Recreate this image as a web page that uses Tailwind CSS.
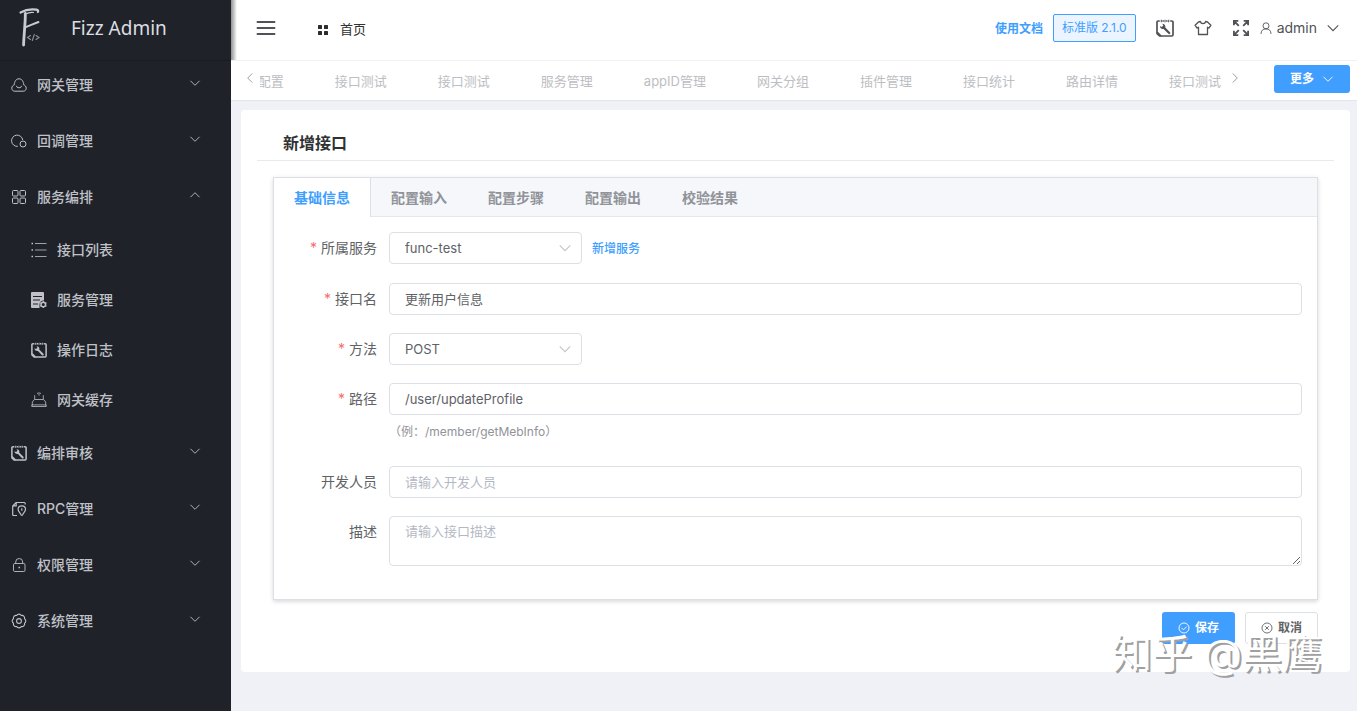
<!DOCTYPE html>
<html lang="zh-CN">
<head>
<meta charset="utf-8">
<meta name="viewport" content="width=device-width, initial-scale=1">
<title>Fizz Admin</title>
<script src="https://cdn.jsdelivr.net/npm/@tailwindcss/browser@4"></script>
</head>
<body class="flex min-h-screen bg-[#eff1f6] font-['Inter','Noto_Sans_CJK_SC',sans-serif] text-[13px] text-[#606266]">

<svg class="hidden" aria-hidden="true">
  <symbol id="down" viewBox="0 0 12 12"><path d="M1.500 3.800 6 8.300l4.500-4.500" fill="none" stroke="currentColor" stroke-width=".9"/></symbol>
  <symbol id="wrench" viewBox="0 0 18 18">
    <path d="M3.800 2H2.200Q1 2 1 3.200v9.800L5 17h10.800q1.200 0 1.200-1.200V3.200Q17 2 15.800 2h-1.600" fill="none" stroke="currentColor" stroke-width="1.700"/>
    <path d="M5.300.8v2.400M9 .8v2.400M12.700.8v2.400" fill="none" stroke="currentColor" stroke-width="1.100"/>
    <path d="M6.400 2h1.500M10.100 2h1.500" fill="none" stroke="currentColor" stroke-width="1.500"/>
    <path d="M.2 12.500 5.500 17.800H3.200L.2 15Z" fill="currentColor"/>
    <path d="M7.800 8.600 13.200 14" fill="none" stroke="currentColor" stroke-width="2.200" stroke-linecap="round"/>
    <path d="M6.200 4.700A3 3 0 0 1 9.400 8.200L8 9.800A3 3 0 0 1 3.900 7L5.700 8 7.300 6.500Z" fill="currentColor"/>
  </symbol>
</svg>

<aside class="w-[231px] shrink-0 bg-[#20222a] text-sm font-medium text-[#bfc1c6]">
  <div class="flex h-[61px] items-center border-b border-[#1a1b22] pb-1 pl-4">
    <svg class="h-11 w-7 shrink-0" viewBox="0 0 28 44" fill="none" stroke="#c9cacf" stroke-linecap="round" aria-hidden="true">
      <path d="M4.500 6.500C9 4 15 2.800 20.500 3.700c1.500.3 2.200 1.200 1.300 2.300" stroke-width="2.200"/>
      <path d="M9.300 7.500c.3 8-1.500 22-1.700 31.500" stroke-width="2.800"/>
      <path d="M9.500 8c3-1.500 5.500-1.800 8-1.500" stroke-width="1.200"/>
      <path d="M9 21.500c4-1.700 8-3.200 13.500-5.500" stroke-width="1.900"/>
      <path d="m14.500 29.500-3 2 3 2M20 29.500l3 2-3 2M18.300 28.500l-2 6" stroke-width="1.100" stroke="#8f9198"/>
    </svg>
    <h1 class="ml-[27px] font-['Noto_Sans',sans-serif] text-[19px] leading-7 font-normal text-[#dcdde0]">Fizz Admin</h1>
  </div>
  <nav class="-mt-1" aria-label="主菜单">
    <button type="button" class="flex h-14 w-full items-center pl-[11px] pr-[30px] text-left">
      <svg class="size-4" viewBox="0 0 16 16" fill="none" stroke="currentColor" aria-hidden="true"><path d="M3.800 14.200C1.800 14.200.8 12.800.8 11.200c0-1.700 1-2.800 2.500-3.400C3.500 4.200 5.200 1.800 8 1.800s4.500 2.400 4.700 6c1.500.6 2.500 1.700 2.500 3.400 0 1.600-1 3-3 3Z"/><path d="M5.300 8.800a2.800 2.800 0 0 0 5.400 0"/></svg>
      <span class="ml-[10px] flex-1">网关管理</span>
      <svg class="mb-1 size-3" aria-hidden="true"><use href="#down"/></svg>
    </button>
    <button type="button" class="flex h-14 w-full items-center pl-[11px] pr-[30px] text-left">
      <svg class="size-4" viewBox="0 0 16 16" fill="none" stroke="currentColor" aria-hidden="true"><path d="M6.800 13.300A5.600 5.600 0 1 1 11.700 7"/><circle cx="12" cy="11" r="3"/></svg>
      <span class="ml-[10px] flex-1">回调管理</span>
      <svg class="mb-1 size-3" aria-hidden="true"><use href="#down"/></svg>
    </button>
    <button type="button" aria-expanded="true" class="flex h-14 w-full items-center pl-[11px] pr-[30px] text-left">
      <svg class="size-4" viewBox="0 0 16 16" fill="none" stroke="currentColor" aria-hidden="true"><rect x="1.500" y="1.500" width="5.500" height="5.500" rx="1"/><rect x="9" y="1.500" width="5.500" height="5.500" rx="1"/><rect x="1.500" y="9" width="5.500" height="5.500" rx="1"/><rect x="9" y="9" width="5.500" height="5.500" rx="1"/></svg>
      <span class="ml-[10px] flex-1">服务编排</span>
      <svg class="mb-1 size-3 rotate-180" aria-hidden="true"><use href="#down"/></svg>
    </button>
    <a href="#" class="flex h-[50px] items-center pl-[31px]">
      <svg class="size-4" viewBox="0 0 16 16" fill="none" stroke="currentColor" aria-hidden="true"><path d="M4 1.500h11.500M4 8h11.500M4 14.500h11.500" stroke-width=".8"/><path d="M.5 1.500H2M.5 8H2M.5 14.500H2" stroke-width="1.400"/></svg>
      <span class="ml-[10px]">接口列表</span>
    </a>
    <a href="#" class="flex h-[50px] items-center pl-[31px]">
      <svg class="size-4" viewBox="0 0 16 16" aria-hidden="true"><path d="M1 0h11q1 0 1 1v7.500a4 4 0 0 0-4.500 4V16H1q-1 0-1-1V1q0-1 1-1Z" fill="currentColor"/><path d="M2 4.500h9M2 8h7M2 12h5" stroke="#20222a" stroke-width="1"/><circle cx="12.300" cy="12.500" r="2.300" fill="none" stroke="currentColor" stroke-width="1.500"/><path d="M12.300 8.900v1.300M12.300 14.800v1.300M9.200 10.700l1 .6M14.400 13.700l1.100.6M9.200 14.300l1-.6M14.400 11.300l1.100-.6" stroke="currentColor" stroke-width="1.200"/></svg>
      <span class="ml-[10px]">服务管理</span>
    </a>
    <a href="#" class="flex h-[50px] items-center pl-[31px]">
      <svg class="size-4" aria-hidden="true"><use href="#wrench"/></svg>
      <span class="ml-[10px]">操作日志</span>
    </a>
    <a href="#" class="flex h-[50px] items-center pl-[31px]">
      <svg class="size-4" viewBox="0 0 16 16" fill="none" stroke="currentColor" stroke-width=".8" aria-hidden="true"><path d="M3.700 3.200v4L1.300 10v3.500M12.300 3.200v4l2.400 2.800v3.500M3.700 7.500h8.600M.8 14.500h14.400v-1.600H.8ZM6 1.500q2-1.300 4 0M7.200 3q.8-.6 1.600 0" /></svg>
      <span class="ml-[10px]">网关缓存</span>
    </a>
    <button type="button" class="flex h-14 w-full items-center pl-[11px] pr-[30px] text-left">
      <svg class="size-4" aria-hidden="true"><use href="#wrench"/></svg>
      <span class="ml-[10px] flex-1">编排审核</span>
      <svg class="mb-1 size-3" aria-hidden="true"><use href="#down"/></svg>
    </button>
    <button type="button" class="flex h-14 w-full items-center pl-[11px] pr-[30px] text-left">
      <svg class="size-4" viewBox="0 0 16 16" fill="none" stroke="currentColor" stroke-width="1.200" aria-hidden="true"><path d="M6 14.500H2.700q-1 0-1-1V5L5 1.500h8.200q1 0 1 1V3.500M5.200 1.500v3.300H1.700"/><path d="M10.800 4.800c2.200 0 3.700 1.300 3.700 3.400 0 2-1.500 3-2.200 4.300-.4.900-.8 2-1.500 2s-1.100-1.100-1.500-2c-.7-1.300-2.200-2.300-2.200-4.300 0-2.100 1.500-3.400 3.700-3.400Z"/><path d="M10.800 7.200v2.600"/></svg>
      <span class="ml-[10px] flex-1">RPC管理</span>
      <svg class="mb-1 size-3" aria-hidden="true"><use href="#down"/></svg>
    </button>
    <button type="button" class="flex h-14 w-full items-center pl-[11px] pr-[30px] text-left">
      <svg class="size-4" viewBox="0 0 16 16" fill="none" stroke="currentColor" stroke-width=".9" aria-hidden="true"><rect x="2.500" y="6.500" width="11.500" height="8" rx="1.200"/><path d="M4.700 6.500V5a3.500 3.500 0 0 1 7 0v1.500"/><path d="M7.500 10.500h1.500" stroke-width="1.300"/></svg>
      <span class="ml-[10px] flex-1">权限管理</span>
      <svg class="mb-1 size-3" aria-hidden="true"><use href="#down"/></svg>
    </button>
    <button type="button" class="flex h-14 w-full items-center pl-[11px] pr-[30px] text-left">
      <svg class="size-4" viewBox="0 0 16 16" fill="none" stroke="currentColor" stroke-width="1.100" stroke-linejoin="round" aria-hidden="true"><path d="M5.700 2.460a2.700 2.700 0 0 1 4.600 0a2.700 2.700 0 0 1 3.240 3.240a2.700 2.700 0 0 1 0 4.600a2.700 2.700 0 0 1-3.240 3.240a2.700 2.700 0 0 1-4.600 0a2.700 2.700 0 0 1-3.240-3.240a2.700 2.700 0 0 1 0-4.600a2.700 2.700 0 0 1 3.240-3.240Z"/><circle cx="8" cy="8" r="2.400"/></svg>
      <span class="ml-[10px] flex-1">系统管理</span>
      <svg class="mb-1 size-3" aria-hidden="true"><use href="#down"/></svg>
    </button>
  </nav>
</aside>

<div class="flex min-w-0 flex-1 flex-col">
  <header class="relative flex h-[61px] shrink-0 items-center border-b border-[#f2f2f4] bg-white pb-1 pl-[25px] pr-[17px]">
    <div class="absolute inset-y-0 left-0 w-[6px] bg-linear-to-r from-[#20222a]/50 to-transparent"></div>
    <button type="button" aria-label="折叠菜单"><svg class="h-[14px] w-5" viewBox="0 0 20 14" stroke="#505256" stroke-width="1.900" stroke-linecap="round"><path d="M1.500 1h17M1.500 7h17M1.500 13h17"/></svg></button>
    <nav class="ml-[42px] flex items-center pt-[3px]" aria-label="位置">
      <a href="#" class="flex items-center gap-3 text-[#303133]"><svg class="size-[10px]" viewBox="0 0 10 10" fill="#2c2d31" aria-hidden="true"><rect width="4" height="4" rx=".6"/><rect x="6" width="4" height="4" rx=".6"/><rect y="6" width="4" height="4" rx=".6"/><rect x="6" y="6" width="4" height="4" rx=".6"/></svg>首页</a>
    </nav>
    <div class="ml-auto flex items-center text-[#505256]">
      <a href="#" class="pt-px text-xs font-bold text-[#409eff]">使用文档</a>
      <span class="ml-[10px] flex h-7 items-center rounded-[2px] border border-[#409eff] bg-[#ecf5ff] px-2 text-xs text-[#409eff]">标准版 2.1.0</span>
      <button type="button" class="ml-5" aria-label="日志"><svg class="size-[18px]"><use href="#wrench"/></svg></button>
      <button type="button" class="ml-5" aria-label="主题"><svg class="size-[18px]" viewBox="0 0 18 18" fill="none" stroke="currentColor" stroke-width="1.300" stroke-linejoin="round"><path d="M6.300 2.500a2.800 2.800 0 0 0 5.400 0L13.500 3l3.400 3.300-2 2.700-1.400-.8v7.300h-9V8.200l-1.400.8-2-2.700L4.500 3Z"/></svg></button>
      <button type="button" class="ml-5" aria-label="全屏"><svg class="size-[18px]" viewBox="0 0 18 18" fill="none" stroke="currentColor" stroke-width="1.800"><path d="M1.900 6.300V1.900h4.400M2 2l4.800 4.800M11.700 1.900h4.400v4.400M16 2l-4.800 4.800M1.900 11.700v4.400h4.400M2 16l4.800-4.800M11.700 16.100h4.400v-4.400M16 16l-4.800-4.800"/></svg></button>
      <button type="button" class="ml-[10px] flex items-center text-sm">
        <svg class="h-[14px] w-3" viewBox="0 0 12 14" fill="none" stroke="currentColor" stroke-width=".9" aria-hidden="true"><circle cx="6" cy="4.800" r="3"/><path d="M1 12.900c0-3.200 1.900-5 5-5s5 1.800 5 5"/></svg>
        <span class="ml-[5px]">admin</span>
        <svg class="ml-[9px] size-[14px]" aria-hidden="true"><use href="#down"/></svg>
      </button>
    </div>
  </header>

  <div class="flex h-10 shrink-0 items-center border-b border-[#e4e5ea] bg-white pl-[13px] pr-[7px]">
    <button type="button" class="mb-[6px]" aria-label="向左"><svg class="size-3 rotate-90 text-[#909399]"><use href="#down"/></svg></button>
    <nav class="ml-1 flex min-w-0 flex-1 justify-end gap-[51px] overflow-hidden pt-[2px] pr-1 whitespace-nowrap text-[#bcbec2]" aria-label="标签页">
      <a href="#">配置</a><a href="#">接口测试</a><a href="#">接口测试</a><a href="#">服务管理</a><a href="#">appID管理</a><a href="#">网关分组</a><a href="#">插件管理</a><a href="#">接口统计</a><a href="#">路由详情</a><a href="#">接口测试</a>
    </nav>
    <button type="button" class="mb-[6px] ml-1" aria-label="向右"><svg class="size-3 -rotate-90 text-[#909399]"><use href="#down"/></svg></button>
    <button type="button" class="ml-[33px] mb-1 flex h-7 w-[76px] items-center justify-center gap-2 rounded-[3px] bg-[#409eff] text-xs font-bold text-white">更多<svg class="size-3" aria-hidden="true"><use href="#down"/></svg></button>
  </div>

  <main class="relative mt-[9px] mr-[7px] mb-[39px] ml-[10px] rounded-[4px] bg-white px-4 pt-[19px] pb-7">
    <h2 class="border-b border-[#e8eaee] pb-[3px] pl-[26px] text-base leading-7 font-bold text-[#303133]">新增接口</h2>
    <div class="mx-4 mt-4 border border-[#dcdfe6] bg-white shadow-[0_2px_4px_rgba(0,0,0,0.12),0_0_6px_rgba(0,0,0,0.04)]">
      <div role="tablist" class="flex h-[39px] border-b border-[#e4e7ed] bg-[#f5f7fa] text-sm font-bold text-[#909399]">
        <button type="button" role="tab" aria-selected="true" class="-mb-px border-r border-[#dcdfe6] bg-white px-5 text-[#409eff]">基础信息</button>
        <button type="button" role="tab" class="border-r border-transparent px-5 pt-px">配置输入</button>
        <button type="button" role="tab" class="border-r border-transparent px-5 pt-px">配置步骤</button>
        <button type="button" role="tab" class="border-r border-transparent px-5 pt-px">配置输出</button>
        <button type="button" role="tab" class="border-r border-transparent px-5 pt-px">校验结果</button>
      </div>
      <form id="api-form" class="flex flex-col gap-[18px] px-[15px] pt-[15px] pb-[33px]">
        <div class="flex h-[33px] items-start">
          <label for="service" class="w-[100px] shrink-0 pr-3 text-right text-sm leading-8"><span class="mr-1 text-[#f56c6c]">*</span>所属服务</label>
          <div class="relative w-[193px]">
            <select id="service" class="h-8 w-full appearance-none rounded border border-[#dcdfe6] bg-white px-[15px] pt-[2px]"><option>func-test</option></select>
            <svg class="pointer-events-none absolute top-[9px] right-[10px] size-[14px] text-[#c0c4cc]" aria-hidden="true"><use href="#down"/></svg>
          </div>
          <a href="#" class="ml-[10px] pt-px text-xs leading-8 font-medium text-[#409eff]">新增服务</a>
        </div>
        <div class="flex">
          <label for="name" class="w-[100px] shrink-0 pr-3 text-right text-sm leading-8"><span class="mr-1 text-[#f56c6c]">*</span>接口名</label>
          <input id="name" value="更新用户信息" class="h-8 min-w-0 flex-1 rounded border border-[#dcdfe6] px-[15px] pb-[2px]">
        </div>
        <div class="flex">
          <label for="method" class="w-[100px] shrink-0 pr-3 text-right text-sm leading-8"><span class="mr-1 text-[#f56c6c]">*</span>方法</label>
          <div class="relative w-[193px]">
            <select id="method" class="h-8 w-full appearance-none rounded border border-[#dcdfe6] bg-white px-[15px] pt-[2px]"><option>POST</option></select>
            <svg class="pointer-events-none absolute top-[9px] right-[10px] size-[14px] text-[#c0c4cc]" aria-hidden="true"><use href="#down"/></svg>
          </div>
        </div>
        <div class="flex">
          <label for="path" class="w-[100px] shrink-0 pr-3 text-right text-sm leading-8"><span class="mr-1 text-[#f56c6c]">*</span>路径</label>
          <div class="min-w-0 flex-1">
            <input id="path" value="/user/updateProfile" class="h-8 w-full rounded border border-[#dcdfe6] px-[15px]">
            <p class="h-[33px] pt-px text-xs leading-8 text-[#909399]">（例：/member/getMebInfo）</p>
          </div>
        </div>
        <div class="flex">
          <label for="dev" class="w-[100px] shrink-0 pr-3 text-right text-sm leading-8">开发人员</label>
          <input id="dev" placeholder="请输入开发人员" class="h-8 min-w-0 flex-1 rounded border border-[#dcdfe6] px-[15px] placeholder:text-[#b4b8c4]">
        </div>
        <div class="flex">
          <label for="desc" class="w-[100px] shrink-0 pr-3 text-right text-sm leading-8">描述</label>
          <textarea id="desc" placeholder="请输入接口描述" class="h-[50px] min-w-0 flex-1 resize-y rounded border border-[#dcdfe6] px-[15px] py-1 leading-5 placeholder:text-[#b4b8c4]"></textarea>
        </div>
      </form>
    </div>
    <div class="mx-4 mt-3 flex justify-end gap-[10px] text-xs font-bold">
      <button type="submit" form="api-form" class="flex h-8 w-[73px] items-center justify-center gap-[5px] rounded-[3px] bg-[#409eff] text-white"><svg class="size-3" viewBox="0 0 12 12" fill="none" stroke="currentColor" stroke-width=".9" aria-hidden="true"><circle cx="6" cy="6" r="5"/><path d="m3.500 5.800 2 2 3.200-3.200"/></svg>保存</button>
      <button type="button" class="flex h-8 w-[73px] items-center justify-center gap-[5px] rounded-[3px] border border-[#dcdfe6] bg-white"><svg class="size-3" viewBox="0 0 12 12" fill="none" stroke="currentColor" stroke-width=".9" aria-hidden="true"><circle cx="6" cy="6" r="5"/><path d="m4.200 4.200 3.600 3.600M7.800 4.200 4.200 7.800"/></svg>取消</button>
    </div>
    <p class="pointer-events-none absolute right-[28px] -bottom-[6px] text-[40px] leading-[48px] whitespace-nowrap text-white text-shadow-[2px_2px_0_#a0a0a0]">知乎 @黑鹰</p>
  </main>
</div>
</body>
</html>
